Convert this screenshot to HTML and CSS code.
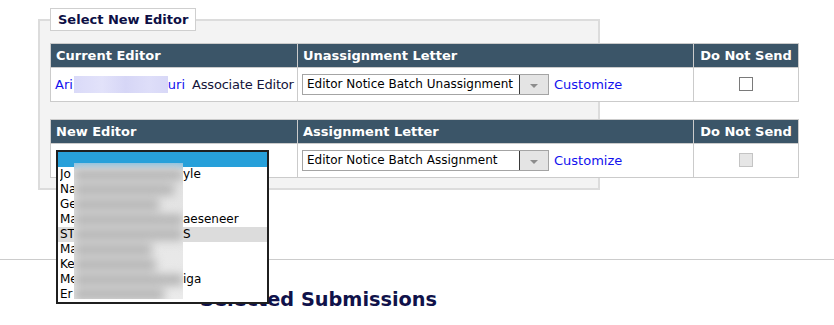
FILE: index.html
```html
<!DOCTYPE html>
<html>
<head>
<meta charset="utf-8">
<link rel="stylesheet" href="styles.css">
</head>
<body>
<div class="top">
  <fieldset class="editor-set">
    <legend class="editor-legend">Select New Editor</legend>
    <table class="grid">
      <colgroup><col class="c1"><col class="c2"><col class="c3"></colgroup>
      <tr class="head">
        <th>Current Editor</th>
        <th>Unassignment Letter</th>
        <th class="center">Do Not Send</th>
      </tr>
      <tr class="body">
        <td class="name-cell"><a class="link" href="#">Ari<span class="redact"></span>uri</a><span class="role">Associate Editor</span></td>
        <td>
          <div class="letter">
            <div class="fake-select"><span class="sel-text">Editor Notice Batch Unassignment</span><span class="sel-btn"><span class="tri"></span></span></div>
            <a class="link" href="#">Customize</a>
          </div>
        </td>
        <td class="center"><span class="check"></span></td>
      </tr>
    </table>
    <table class="grid second">
      <colgroup><col class="c1"><col class="c2"><col class="c3"></colgroup>
      <tr class="head">
        <th>New Editor</th>
        <th>Assignment Letter</th>
        <th class="center">Do Not Send</th>
      </tr>
      <tr class="body">
        <td class="pick-cell">
          <div class="pick">
            <div class="listbox">
              <div class="opt selected">&nbsp;</div>
              <div class="opt"><span class="pre">Jo</span>yle</div>
              <div class="opt"><span class="pre">Na</span></div>
              <div class="opt"><span class="pre">Ge</span></div>
              <div class="opt"><span class="pre">Ma</span>aeseneer</div>
              <div class="opt hover"><span class="pre">ST</span>S</div>
              <div class="opt"><span class="pre">Ma</span></div>
              <div class="opt"><span class="pre">Ke</span></div>
              <div class="opt"><span class="pre">Me</span>iga</div>
              <div class="opt"><span class="pre">Er</span></div>
              <div class="blur-box">
                <div class="blur-inner">
                  <div class="smear w1"></div>
                  <div class="smear w2"></div>
                  <div class="smear w3"></div>
                  <div class="smear w4"></div>
                  <div class="smear w5"></div>
                  <div class="smear w6"></div>
                  <div class="smear w7"></div>
                  <div class="smear w8"></div>
                  <div class="smear w9"></div>
                </div>
              </div>
            </div>
          </div>
        </td>
        <td>
          <div class="letter">
            <div class="fake-select"><span class="sel-text">Editor Notice Batch Assignment</span><span class="sel-btn"><span class="tri"></span></span></div>
            <a class="link" href="#">Customize</a>
          </div>
        </td>
        <td class="center"><span class="check disabled"></span></td>
      </tr>
    </table>
  </fieldset>
</div>
<div class="rule"></div>
<h2 class="subs">Selected Submissions</h2>
</body>
</html>
```
FILE: styles.css
```css
html, body {
  margin: 0;
  padding: 0;
  background: #ffffff;
}
body {
  font-family: "DejaVu Sans", Verdana, sans-serif;
  font-size: 13px;
  color: #14143a;
}
.top {
  padding: 8px 0 0 38px;
}
.editor-set {
  box-sizing: border-box;
  width: 562px;
  min-width: 0;
  margin: 0;
  padding: 12px 10px 10px 10px;
  border: 2px solid #dcdcdc;
  background: #f3f3f3;
}
.editor-legend {
  box-sizing: border-box;
  height: 23px;
  padding: 0 7px;
  border: 1px solid #cfcfcf;
  background: #ffffff;
  font-weight: bold;
  font-size: 13px;
  line-height: 21px;
  color: #0d0f45;
}
.grid {
  width: 748px;
  border-collapse: collapse;
  table-layout: fixed;
  background: #ffffff;
}
.grid.second {
  margin-top: 17px;
}
.c1 { width: 247px; }
.c2 { width: 396px; }
.c3 { width: 105px; }
.grid th, .grid td {
  border: 1px solid #cbcbcb;
  padding: 0 0 0 5px;
  text-align: left;
  vertical-align: middle;
}
.head th {
  height: 23px;
  background: #3b5568;
  color: #ffffff;
  font-weight: bold;
  font-size: 13px;
  white-space: nowrap;
}
.body td {
  height: 33px;
  white-space: nowrap;
}
.grid .center {
  text-align: center;
  padding: 0;
}
.name-cell {
  padding-left: 4px !important;
}
.link {
  color: #1212ee;
  text-decoration: none;
}
.role {
  margin-left: 7px;
  letter-spacing: -0.2px;
}
.redact {
  display: inline-block;
  width: 94px;
  height: 17px;
  vertical-align: -4px;
  margin-left: 1px;
  background: linear-gradient(90deg, #dadaf8 0%, #e2e2fa 30%, #d6d6f6 55%, #dedef9 80%, #d8d8f7 100%);
}
.letter {
  display: flex;
  align-items: center;
  gap: 5px;
}
.fake-select {
  box-sizing: border-box;
  display: flex;
  width: 247px;
  height: 21px;
  border: 1px solid #a4a4a4;
  background: #ffffff;
  margin-left: -1px;
}
.sel-text {
  flex: 1;
  font-size: 12px;
  line-height: 19px;
  padding-left: 4px;
  color: #000000;
  overflow: hidden;
}
.sel-btn {
  width: 28px;
  border-left: 1px solid #3a3a3a;
  background: #e4e4e4;
  display: flex;
  align-items: center;
  justify-content: center;
}
.tri {
  width: 0;
  height: 0;
  border-left: 4px solid transparent;
  border-right: 4px solid transparent;
  border-top: 4px solid #8c8c8c;
  margin-top: 2px;
}
.check {
  display: inline-block;
  box-sizing: border-box;
  width: 14px;
  height: 14px;
  border: 1px solid #7a7a7a;
  background: #ffffff;
  vertical-align: middle;
  margin-top: -4px;
}
.check.disabled {
  border-color: #c4c4c4;
  background: #e6e6e6;
}
.pick-cell {
  position: relative;
}
.pick {
  position: relative;
  height: 21px;
}
.listbox {
  position: absolute;
  left: 0;
  top: 0;
  box-sizing: border-box;
  width: 213px;
  height: 154px;
  border: 2px solid #1f1f1f;
  background: #ffffff;
  z-index: 5;
  overflow: hidden;
}
.opt {
  height: 15px;
  line-height: 15px;
  font-size: 12px;
  padding-left: 2px;
  color: #000000;
  white-space: nowrap;
}
.opt.selected {
  background: #27a0da;
}
.opt.hover {
  background: #dcdcdc;
}
.pre {
  display: inline-block;
  width: 123px;
  overflow: hidden;
  vertical-align: top;
}
.blur-box {
  position: absolute;
  left: 16px;
  top: 11px;
  width: 109px;
  height: 136px;
  overflow: hidden;
  background: linear-gradient(#86bfe0 0, #a6cde5 4px, #e2e2e2 8px, #ebebeb 100%);
}
.blur-inner {
  padding-top: 4px;
  filter: blur(5px);
}
.smear {
  height: 15px;
  background: linear-gradient(#e8e8e8 0 1px, #b4b4b4 4px, #a8a8a8 10px, #dedede 14px);
}
.w1 { width: 109px; }
.w2 { width: 100px; }
.w3 { width: 85px; }
.w4 { width: 109px; }
.w5 { width: 109px; }
.w6 { width: 78px; }
.w7 { width: 82px; }
.w8 { width: 109px; }
.w9 { width: 90px; }
.rule {
  margin-top: 69px;
  border-top: 1px solid #cccccc;
}
.subs {
  margin: 28px 0 0 200px;
  font-size: 19.3px;
  font-weight: bold;
  color: #10124a;
  line-height: 24px;
}
```
